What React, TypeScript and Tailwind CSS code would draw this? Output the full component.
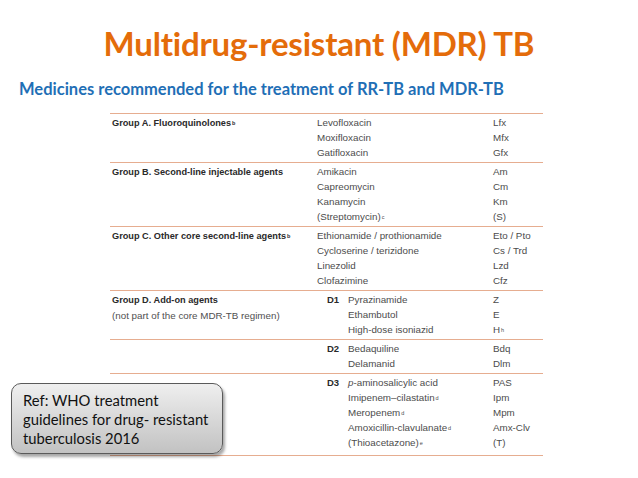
import React from "react";

type Row = { drug: React.ReactNode; abbr: React.ReactNode };
type Section = {
  label?: React.ReactNode;
  sub?: string;
  tag?: string;
  rows: Row[];
  extra?: string;
};

const Sup = ({ children }: { children: React.ReactNode }) => (
  <sup className="text-[5.5px] relative -top-[1px] ml-[1px]">{children}</sup>
);

const SECTIONS: Section[] = [
  {
    label: (
      <>
        Group A. Fluoroquinolones<Sup>b</Sup>
      </>
    ),
    rows: [
      { drug: "Levofloxacin", abbr: "Lfx" },
      { drug: "Moxifloxacin", abbr: "Mfx" },
      { drug: "Gatifloxacin", abbr: "Gfx" },
    ],
  },
  {
    label: "Group B. Second-line injectable agents",
    rows: [
      { drug: "Amikacin", abbr: "Am" },
      { drug: "Capreomycin", abbr: "Cm" },
      { drug: "Kanamycin", abbr: "Km" },
      {
        drug: (
          <>
            (Streptomycin)<Sup>c</Sup>
          </>
        ),
        abbr: "(S)",
      },
    ],
  },
  {
    label: (
      <>
        Group C. Other core second-line agents<Sup>b</Sup>
      </>
    ),
    rows: [
      { drug: "Ethionamide / prothionamide", abbr: "Eto / Pto" },
      { drug: "Cycloserine / terizidone", abbr: "Cs / Trd" },
      { drug: "Linezolid", abbr: "Lzd" },
      { drug: "Clofazimine", abbr: "Cfz" },
    ],
  },
  {
    label: "Group D. Add-on agents",
    sub: "(not part of the core MDR-TB regimen)",
    tag: "D1",
    rows: [
      { drug: "Pyrazinamide", abbr: "Z" },
      { drug: "Ethambutol", abbr: "E" },
      {
        drug: "High-dose isoniazid",
        abbr: (
          <>
            H<Sup>h</Sup>
          </>
        ),
      },
    ],
  },
  {
    tag: "D2",
    rows: [
      { drug: "Bedaquiline", abbr: "Bdq" },
      { drug: "Delamanid", abbr: "Dlm" },
    ],
  },
  {
    tag: "D3",
    extra: "pb-[4.5px]",
    rows: [
      {
        drug: (
          <>
            <i>p</i>-aminosalicylic acid
          </>
        ),
        abbr: "PAS",
      },
      {
        drug: (
          <>
            Imipenem–cilastatin<Sup>d</Sup>
          </>
        ),
        abbr: "Ipm",
      },
      {
        drug: (
          <>
            Meropenem<Sup>d</Sup>
          </>
        ),
        abbr: "Mpm",
      },
      {
        drug: (
          <>
            Amoxicillin-clavulanate<Sup>d</Sup>
          </>
        ),
        abbr: "Amx-Clv",
      },
      {
        drug: (
          <>
            (Thioacetazone)<Sup>e</Sup>
          </>
        ),
        abbr: "(T)",
      },
    ],
  },
];

function TableSection({ section }: { section: Section }) {
  return (
    <div
      className={`flex border-t border-[#e6ad90] py-[1.5px] ${section.extra ?? ""}`}
    >
      <div className="w-[207px] shrink-0 pl-[2px] leading-[15px]">
        {section.label && (
          <div className="font-bold text-[9.2px] text-[#2a2a2a]">
            {section.label}
          </div>
        )}
        {section.sub && <div className="text-[#505050]">{section.sub}</div>}
      </div>
      <div className="flex flex-col">
        {section.rows.map((r, i) => (
          <div key={i} className="flex h-[15px] items-center">
            {section.tag !== undefined && (
              <span className="w-[31px] shrink-0 pl-[10px] font-bold text-[#2a2a2a] text-[9.5px]">
                {i === 0 ? section.tag : ""}
              </span>
            )}
            <span
              className={
                section.tag !== undefined ? "w-[145px] shrink-0" : "w-[176px] shrink-0"
              }
            >
              {r.drug}
            </span>
            <span>{r.abbr}</span>
          </div>
        ))}
      </div>
    </div>
  );
}

export default function App() {
  return (
    <div className="w-[638px] h-[478px] bg-white relative overflow-hidden font-['Lato',sans-serif]">
      <h1 className="pt-[23px] text-center text-[33px] leading-[40px] font-bold text-[#e46c0a] tracking-[-0.2px]">
        Multidrug-resistant (MDR) TB
      </h1>
      <h2 className="mt-[16px] pl-[19px] text-[16.5px] leading-[20px] font-bold text-[#1f6fb6]">
        Medicines recommended for the treatment of RR-TB and MDR-TB
      </h2>
      <div className="ml-[110px] mt-[14px] w-[433px] border-b border-[#e6ad90] font-['Liberation_Sans',Arial,sans-serif] text-[9.8px] text-[#4c4c4c]">
        {SECTIONS.map((s, i) => (
          <TableSection key={i} section={s} />
        ))}
      </div>
      <div className="absolute left-[11px] top-[383px] w-[212px] h-[71px] rounded-[10px] border border-[#5a5a5a] bg-gradient-to-b from-[#efefef] to-[#c2c2c2] shadow-[2px_3px_3px_rgba(0,0,0,0.35)] pl-[11px] pt-[7px] text-[14.8px] leading-[19px] text-[#111] whitespace-nowrap">
        Ref: WHO treatment
        <br />
        guidelines for drug- resistant
        <br />
        tuberculosis 2016
      </div>
    </div>
  );
}
